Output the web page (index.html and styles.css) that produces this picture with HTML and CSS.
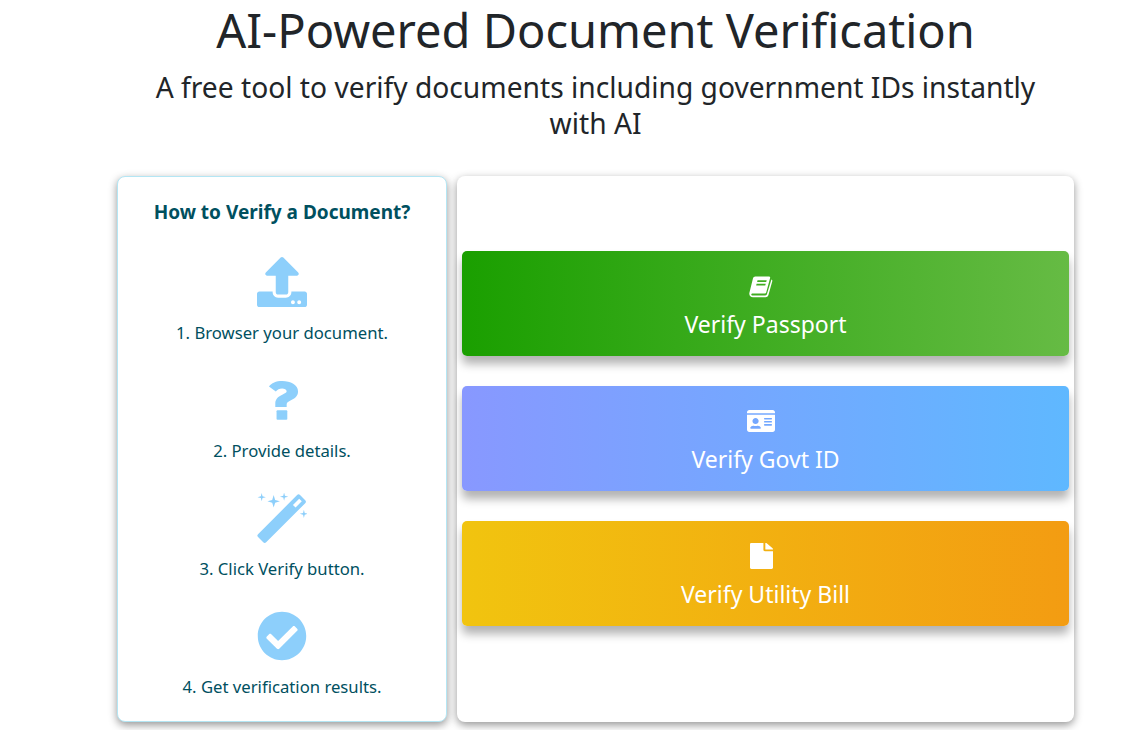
FILE: index.html
```html
<!DOCTYPE html>
<html lang="en">
<head>
<meta charset="utf-8">
<title>AI-Powered Document Verification</title>
<link rel="stylesheet" href="styles.css">
</head>
<body>
<main class="page">
  <header class="hero">
    <h1 class="hero-title">AI-Powered Document Verification</h1>
    <p class="hero-sub">A free tool to verify documents including government IDs instantly with AI</p>
  </header>
  <section class="panels">
    <aside class="card steps">
      <h2 class="steps-title">How to Verify a Document?</h2>
      <div class="step">
        <svg class="step-icon" viewBox="0 0 512 512"><path d="M296 384h-80c-13.300 0-24-10.700-24-24V192h-87.700c-17.800 0-26.700-21.500-14.100-34.100L242.300 5.700c7.500-7.500 19.800-7.500 27.300 0l152.200 152.200c12.600 12.600 3.700 34.100-14.100 34.100H320v168c0 13.300-10.700 24-24 24zm216-8v112c0 13.300-10.700 24-24 24H24c-13.300 0-24-10.700-24-24V376c0-13.300 10.700-24 24-24h136v8c0 30.900 25.100 56 56 56h80c30.900 0 56-25.100 56-56v-8h136c13.300 0 24 10.700 24 24zm-124 88c0-11-9-20-20-20s-20 9-20 20 9 20 20 20 20-9 20-20zm64 0c0-11-9-20-20-20s-20 9-20 20 9 20 20 20 20-9 20-20z"/></svg>
        <p class="step-text">1. Browser your document.</p>
      </div>
      <div class="step">
        <svg class="step-icon" viewBox="0 0 48 48"><g transform="matrix(1.213 0 0 .954 -.63 2.94)"><path d="M10 8.500C12 5 15.500 3 20.500 3 27 3 33 6.800 33 13.500c0 5-3 7.200-6 9.100-2 1.300-3 2-3 3.900V29h-9v-3.500c0-4.600 2.500-6.800 5.500-8.700 2-1.300 3.500-2 3.500-3.500 0-1.700-1.700-2.800-3.600-2.800-2.300 0-3.600 1.200-5 3.100z"/><rect x="16" y="32.500" width="8.500" height="9.500" rx=".8"/></g></svg>
        <p class="step-text">2. Provide details.</p>
      </div>
      <div class="step">
        <svg class="step-icon" viewBox="0 1 48 48"><path fill-rule="evenodd" d="M1 40.500 38.500 3a2 2 0 0 1 2.800 0l5 5a2 2 0 0 1 0 2.800L8.800 48.300a2 2 0 0 1-2.800 0l-5-5a2 2 0 0 1 0-2.800zM34.500 12.500l2.500 2.500 6-6-2.500-2.500z"/><path d="M4.500 1 5.300 4.200 8.500 5 5.300 5.800 4.500 9 3.700 5.800.5 5 3.700 4.200zM16 3l1.400 4.600L22 9l-4.600 1.400L16 15l-1.400-4.600L10 9l4.600-1.400zM26 .5l.8 3.200L30 4.500l-3.200.8L26 8.500l-.8-3.200-3.200-.8 3.200-.8zM45 17l.8 3.200 3.200.8-3.200.8L45 25l-.8-3.200-3.200-.8 3.200-.8z"/></svg>
        <p class="step-text">3. Click Verify button.</p>
      </div>
      <div class="step">
        <svg class="step-icon" viewBox="0 0 512 512"><path d="M504 256c0 136.967-111.033 248-248 248S8 392.967 8 256 119.033 8 256 8s248 111.033 248 248zM227.314 387.314l184-184c6.248-6.248 6.248-16.379 0-22.627l-22.627-22.627c-6.248-6.249-16.379-6.249-22.628 0L216 308.118l-70.059-70.059c-6.248-6.248-16.379-6.248-22.628 0l-22.627 22.627c-6.248 6.248-6.248 16.379 0 22.627l104 104c6.249 6.249 16.379 6.249 22.628.001z"/></svg>
        <p class="step-text">4. Get verification results.</p>
      </div>
    </aside>
    <div class="card actions">
      <a class="verify verify-passport" href="#">
        <svg class="verify-icon" viewBox="0 0 30 30"><path fill-rule="evenodd" d="M8.500 4H24a1.500 1.500 0 0 1 1.500 1.900L21 22.500a1.500 1.500 0 0 1-1.400 1.100H5.500c-1 0-1.700.5-1.700 1.200 0 .8.700 1.200 1.700 1.200H20c.8 0 1.600-.6 1.800-1.400L27 7.500c.9.400 1.300 1.100 1 2.100L23.500 25.800A3.400 3.400 0 0 1 20.200 28H5.800C3.300 28 1.500 26.300 1.500 24c0-.6.100-1 .2-1.500L5.700 6.300C6 5 7.100 4 8.500 4zM11 8.500l-.5 2h10.500l.6-2zM9.900 12.500l-.5 2h10.500l.6-2z"/></svg>
        <span class="verify-label">Verify Passport</span>
      </a>
      <a class="verify verify-id" href="#">
        <svg class="verify-icon" viewBox="0 0 576 512"><path d="M528 32H48C21.500 32 0 53.500 0 80v16h576V80c0-26.500-21.500-48-48-48zM0 432c0 26.500 21.500 48 48 48h480c26.500 0 48-21.500 48-48V128H0v304zm352-232c0-4.400 3.600-8 8-8h144c4.400 0 8 3.600 8 8v16c0 4.400-3.600 8-8 8H360c-4.400 0-8-3.600-8-8v-16zm0 64c0-4.400 3.600-8 8-8h144c4.400 0 8 3.600 8 8v16c0 4.400-3.600 8-8 8H360c-4.400 0-8-3.600-8-8v-16zm0 64c0-4.400 3.600-8 8-8h144c4.400 0 8 3.600 8 8v16c0 4.400-3.600 8-8 8H360c-4.400 0-8-3.600-8-8v-16zM176 192c35.300 0 64 28.700 64 64s-28.700 64-64 64-64-28.700-64-64 28.700-64 64-64zM67.100 396.200C75.500 370.500 99.600 352 128 352h8.200c12.300 5.100 25.700 8 39.800 8s27.600-2.900 39.800-8h8.200c28.400 0 52.500 18.500 60.900 44.200 3.200 9.900-5.200 19.800-15.600 19.800H82.700c-10.400 0-18.800-10-15.600-19.800z"/></svg>
        <span class="verify-label">Verify Govt ID</span>
      </a>
      <a class="verify verify-bill" href="#">
        <svg class="verify-icon verify-icon-file" viewBox="0 0 384 512" preserveAspectRatio="none"><path d="M224 136V0H24C10.700 0 0 10.700 0 24v464c0 13.300 10.700 24 24 24h336c13.300 0 24-10.700 24-24V160H248c-13.200 0-24-10.800-24-24zm160-14.100v6.100H256V0h6.100c6.400 0 12.500 2.500 17 7l97.900 98c4.500 4.500 7 10.600 7 16.900z"/></svg>
        <span class="verify-label">Verify Utility Bill</span>
      </a>
    </div>
  </section>
</main>
</body>
</html>
```
FILE: styles.css
```css
* { box-sizing: border-box; }
html, body { margin: 0; padding: 0; background: #fff; }
body {
  font-family: "Noto Sans", "Open Sans", "Liberation Sans", sans-serif;
  color: #212529;
  overflow: hidden;
}
.page {
  width: 957px;
  margin-left: 117px;
  height: 730px;
}
.hero { text-align: center; }
.hero-title {
  margin: 0;
  padding-top: 2px;
  font-size: 47px;
  font-weight: 400;
  line-height: 56px;
}
.hero-sub {
  margin: 0 auto;
  padding-top: 11px;
  max-width: 900px;
  font-size: 28.2px;
  line-height: 36px;
}
.panels {
  display: grid;
  grid-template-columns: 330px 617px;
  grid-template-rows: 546px;
  gap: 10px;
  margin-top: 35px;
}
.card {
  background: #fff;
  border-radius: 8px;
  box-shadow: 0 3px 8px rgba(0, 0, 0, .42);
}
.steps {
  border: 1px solid #b4e6f4;
  padding: 23px 0 0;
  text-align: center;
  color: #00505f;
}
.steps-title {
  margin: 0 0 33px;
  font-size: 19px;
  font-weight: 700;
  line-height: 24px;
  color: #00505f;
}
.step { height: 118px; }
.step:last-child { height: auto; }
.step-icon {
  display: block;
  width: 50px;
  height: 50px;
  margin: 0 auto;
  fill: #8dcffb;
}
.step-text {
  margin: 14px 0 0;
  font-size: 16.7px;
  line-height: 24px;
}
.actions {
  display: flex;
  flex-direction: column;
  gap: 30px;
  padding: 75px 5px 0;
}
.verify {
  display: flex;
  flex-direction: column;
  align-items: center;
  height: 105px;
  padding-top: 22px;
  border-radius: 5px;
  color: #fff;
  text-decoration: none;
  box-shadow: 0 8px 10px rgba(0, 0, 0, .3);
}
.verify-icon {
  width: 28px;
  height: 26px;
  margin-right: 9px;
  fill: #fff;
}
.verify-icon-file { width: 23px; }
.verify-label {
  margin-top: 7px;
  font-size: 23px;
  line-height: 36px;
}
.verify-passport { background: linear-gradient(90deg, #1a9f00, #66bb44); }
.verify-id { background: linear-gradient(90deg, #8898ff, #5fb8ff); }
.verify-bill { background: linear-gradient(90deg, #f1c40f, #f39c12); }
```
